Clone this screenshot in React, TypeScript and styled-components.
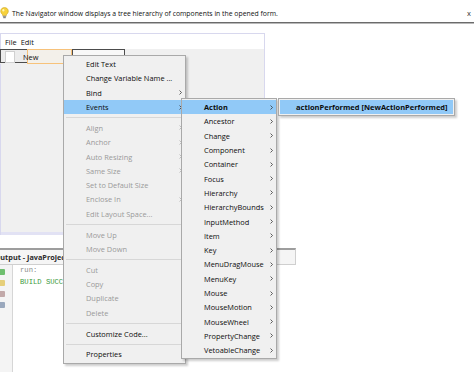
import React from 'react';
import styled, { createGlobalStyle } from 'styled-components';

const GlobalStyle = createGlobalStyle`
  html, body {
    margin: 0;
    padding: 0;
    background: #fff;
  }
  body {
    font-family: 'Open Sans', 'Noto Sans', sans-serif;
  }
`;

const Screen = styled.div`
  position: relative;
  width: 474px;
  height: 372px;
  overflow: hidden;
  background: #fff;
  color: #0d0d0d;
  font-size: 7.4px;
`;

/* ---------- hint bar ---------- */

const InfoBar = styled.div`
  box-sizing: border-box;
  height: 22px;
  padding-top: 4px;
  display: flex;
  align-items: center;
  gap: 3px;
`;

const InfoText = styled.span`
  flex: 1;
  font-size: 6.85px;
  color: #111;
  white-space: nowrap;
`;

const CloseMark = styled.span`
  font-size: 7.5px;
  color: #333;
  padding-right: 3px;
`;

const Divider = styled.div`
  height: 0;
  border-top: 1px solid #6b6b6b;
  border-bottom: 1px solid #b8b8b8;
`;

/* ---------- form designer ---------- */

const FormFrame = styled.div`
  box-sizing: border-box;
  margin-top: 9px;
  width: 265px;
  height: 202px;
  border: 1px solid #d8d8ee;
  border-bottom: none;
  display: flex;
  flex-direction: column;
`;

const FrameMenuBar = styled.div`
  height: 15px;
  background: #fff;
  display: flex;
  align-items: center;
  gap: 4px;
  padding-left: 4px;
`;

const FrameToolbar = styled.div`
  height: 15px;
  display: flex;
  background: #f0f0f0;
  margin-left: -1px;
`;

const ToggleBox = styled.div`
  box-sizing: border-box;
  width: 27px;
  height: 14px;
  border: 1px solid #4c4c4c;
  border-right: none;
  background: #ececec;
  padding: 1px 0 0 4px;
`;

const ToggleSquare = styled.div`
  width: 8px;
  height: 10px;
  background: #fff;
  border: 1px solid #d0d0d0;
`;

const NewButton = styled.div`
  box-sizing: border-box;
  width: 45px;
  height: 15px;
  border: 1px solid #f7c27a;
  background: #f3f0ea;
  display: flex;
  align-items: center;
`;

const NewLabel = styled.span`
  margin-left: -5px;
`;

const FieldBox = styled.div`
  box-sizing: border-box;
  width: 53px;
  height: 14px;
  border: 1px solid #4c4c4c;
  background: #f8f8f8;
`;

const FrameBody = styled.div`
  flex: 1;
  background: #f0f0f0;
`;

const FrameBottom = styled.div`
  height: 3px;
  background: #e2e2f4;
`;

/* ---------- output window ---------- */

const OutputTab = styled.div`
  box-sizing: border-box;
  margin-top: 13px;
  width: 296px;
  height: 17px;
  border-top: 2px solid #9d9d9d;
  border-bottom: 1px solid #cfcfcf;
  border-right: 1px solid #cfcfcf;
  background: #f5f5f5;
  display: flex;
  align-items: center;
  overflow: hidden;
`;

const TabTitle = styled.span`
  margin-left: -5.5px;
  font-size: 7.3px;
  font-weight: 700;
  color: #2b2b2b;
  white-space: nowrap;
`;

const OutputBody = styled.div`
  display: flex;
  height: 110px;
`;

const IconStrip = styled.div`
  width: 12px;
  border-right: 1px solid #d6d6d6;
  background: #f4f4f4;
  display: flex;
  flex-direction: column;
  gap: 5px;
  padding-top: 4px;
  overflow: hidden;
`;

const StripIcon = styled.div<{ $color: string }>`
  width: 8px;
  height: 6px;
  margin-left: -3px;
  background: ${(p) => p.$color};
  border-radius: 1px;
`;

const Console = styled.div`
  padding-left: 7px;
  font-family: 'Liberation Mono', 'DejaVu Sans Mono', monospace;
  font-size: 7.2px;
  line-height: 11.5px;
  white-space: pre;
`;

const ConsoleLine = styled.div<{ $tone: 'muted' | 'ok' }>`
  color: ${(p) => (p.$tone === 'ok' ? '#3d9a3d' : '#8a8a8a')};
`;

/* ---------- popup menus ---------- */

const Popup = styled.div`
  position: absolute;
  box-sizing: border-box;
  background: #f0f0f0;
  border: 1px solid #a9a9a9;
  padding: 1px 0;
  box-shadow: 2px 2px 2px rgba(0, 0, 0, 0.2);
`;

const MainMenu = styled(Popup)`
  left: 63px;
  top: 55px;
  width: 123px;
`;

const EventsMenu = styled(Popup)`
  left: 181px;
  top: 98px;
  width: 96px;
`;

const ActionMenu = styled(Popup)`
  left: 278px;
  top: 98px;
  width: 177px;
  padding: 1px;
`;

const Item = styled.div<{ $active?: boolean; $disabled?: boolean; $bold?: boolean; $indent?: number }>`
  height: 14.3px;
  display: flex;
  align-items: center;
  padding-left: ${(p) => p.$indent ?? 22}px;
  padding-right: 3px;
  background: ${(p) => (p.$active ? '#91c9f7' : 'transparent')};
  color: ${(p) => (p.$disabled ? '#9a9a9a' : '#0d0d0d')};
  font-weight: ${(p) => (p.$bold ? 700 : 400)};
  white-space: nowrap;
`;

const ItemLabel = styled.span`
  flex: 1;
`;

const WideLabel = styled.span`
  font-size: 7.5px;
`;

const Separator = styled.div`
  height: 6.6px;
  display: flex;
  align-items: center;
  padding: 0 2px;

  &::after {
    content: '';
    flex: 1;
    height: 1px;
    background: #d7d7d7;
  }
`;

const Chevron = ({ dim }: { dim?: boolean }) => (
  <svg width="3" height="5" viewBox="0 0 3 5">
    <path d="M0.5 0.5 L2.5 2.5 L0.5 4.5" fill="none" stroke={dim ? '#b0b0b0' : '#3a3a3a'} strokeWidth="0.8" />
  </svg>
);

const Bulb = () => (
  <svg width="9" height="12" viewBox="0 0 9 12">
    <path d="M4.5 0.6 C2.2 0.6 0.7 2.2 0.7 4.2 C0.7 5.8 1.8 6.7 2.5 7.6 L2.7 8.6 L6.3 8.6 L6.5 7.6 C7.2 6.7 8.3 5.8 8.3 4.2 C8.3 2.2 6.8 0.6 4.5 0.6 Z" fill="#f7d23c" stroke="#c9a21c" strokeWidth="0.6" />
    <ellipse cx="3.4" cy="3.3" rx="1" ry="1.3" fill="#fff6b8" />
    <rect x="2.8" y="8.8" width="3.4" height="1.2" fill="#9a9a9a" />
    <rect x="3.2" y="10.1" width="2.6" height="1.1" fill="#7a7a7a" />
  </svg>
);

type Entry = { label?: string; sub?: boolean; disabled?: boolean; active?: boolean; bold?: boolean; sep?: boolean };

const mainEntries: Entry[] = [
  { label: 'Edit Text' },
  { label: 'Change Variable Name ...' },
  { label: 'Bind', sub: true },
  { label: 'Events', sub: true, active: true },
  { sep: true },
  { label: 'Align', sub: true, disabled: true },
  { label: 'Anchor', sub: true, disabled: true },
  { label: 'Auto Resizing', sub: true, disabled: true },
  { label: 'Same Size', sub: true, disabled: true },
  { label: 'Set to Default Size', disabled: true },
  { label: 'Enclose In', sub: true, disabled: true },
  { label: 'Edit Layout Space...', disabled: true },
  { sep: true },
  { label: 'Move Up', disabled: true },
  { label: 'Move Down', disabled: true },
  { sep: true },
  { label: 'Cut', disabled: true },
  { label: 'Copy', disabled: true },
  { label: 'Duplicate', disabled: true },
  { label: 'Delete', disabled: true },
  { sep: true },
  { label: 'Customize Code...' },
  { sep: true },
  { label: 'Properties' },
];

const eventNames = [
  'Action', 'Ancestor', 'Change', 'Component', 'Container', 'Focus', 'Hierarchy',
  'HierarchyBounds', 'InputMethod', 'Item', 'Key', 'MenuDragMouse', 'MenuKey',
  'Mouse', 'MouseMotion', 'MouseWheel', 'PropertyChange', 'VetoableChange',
];

const MenuEntries = ({ entries }: { entries: Entry[] }) => (
  <>
    {entries.map((e, i) =>
      e.sep ? (
        <Separator key={i} />
      ) : (
        <Item key={i} $active={e.active} $disabled={e.disabled} $bold={e.bold}>
          <ItemLabel>{e.label}</ItemLabel>
          {e.sub && <Chevron dim={e.disabled} />}
        </Item>
      ),
    )}
  </>
);

export default function App() {
  const events: Entry[] = eventNames.map((n, i) => ({ label: n, sub: true, active: i === 0, bold: i === 0 }));

  return (
    <Screen>
      <GlobalStyle />
      <InfoBar>
        <Bulb />
        <InfoText>The Navigator window displays a tree hierarchy of components in the opened form.</InfoText>
        <CloseMark>x</CloseMark>
      </InfoBar>
      <Divider />

      <FormFrame>
        <FrameMenuBar>
          <span>File</span>
          <span>Edit</span>
        </FrameMenuBar>
        <FrameToolbar>
          <ToggleBox>
            <ToggleSquare />
          </ToggleBox>
          <NewButton>
            <NewLabel>New</NewLabel>
          </NewButton>
          <FieldBox />
        </FrameToolbar>
        <FrameBody />
        <FrameBottom />
      </FormFrame>

      <OutputTab>
        <TabTitle>Output - JavaProject</TabTitle>
      </OutputTab>
      <OutputBody>
        <IconStrip>
          <StripIcon $color="#6fbf6f" />
          <StripIcon $color="#e6cf7a" />
          <StripIcon $color="#c2a9a9" />
          <StripIcon $color="#9aa8bd" />
        </IconStrip>
        <Console>
          <ConsoleLine $tone="muted">run:</ConsoleLine>
          <ConsoleLine $tone="ok">BUILD SUCCESSFUL</ConsoleLine>
        </Console>
      </OutputBody>

      <MainMenu>
        <MenuEntries entries={mainEntries} />
      </MainMenu>
      <EventsMenu>
        <MenuEntries entries={events} />
      </EventsMenu>
      <ActionMenu>
        <Item $active $bold $indent={16}>
          <WideLabel>actionPerformed [NewActionPerformed]</WideLabel>
        </Item>
      </ActionMenu>
    </Screen>
  );
}
